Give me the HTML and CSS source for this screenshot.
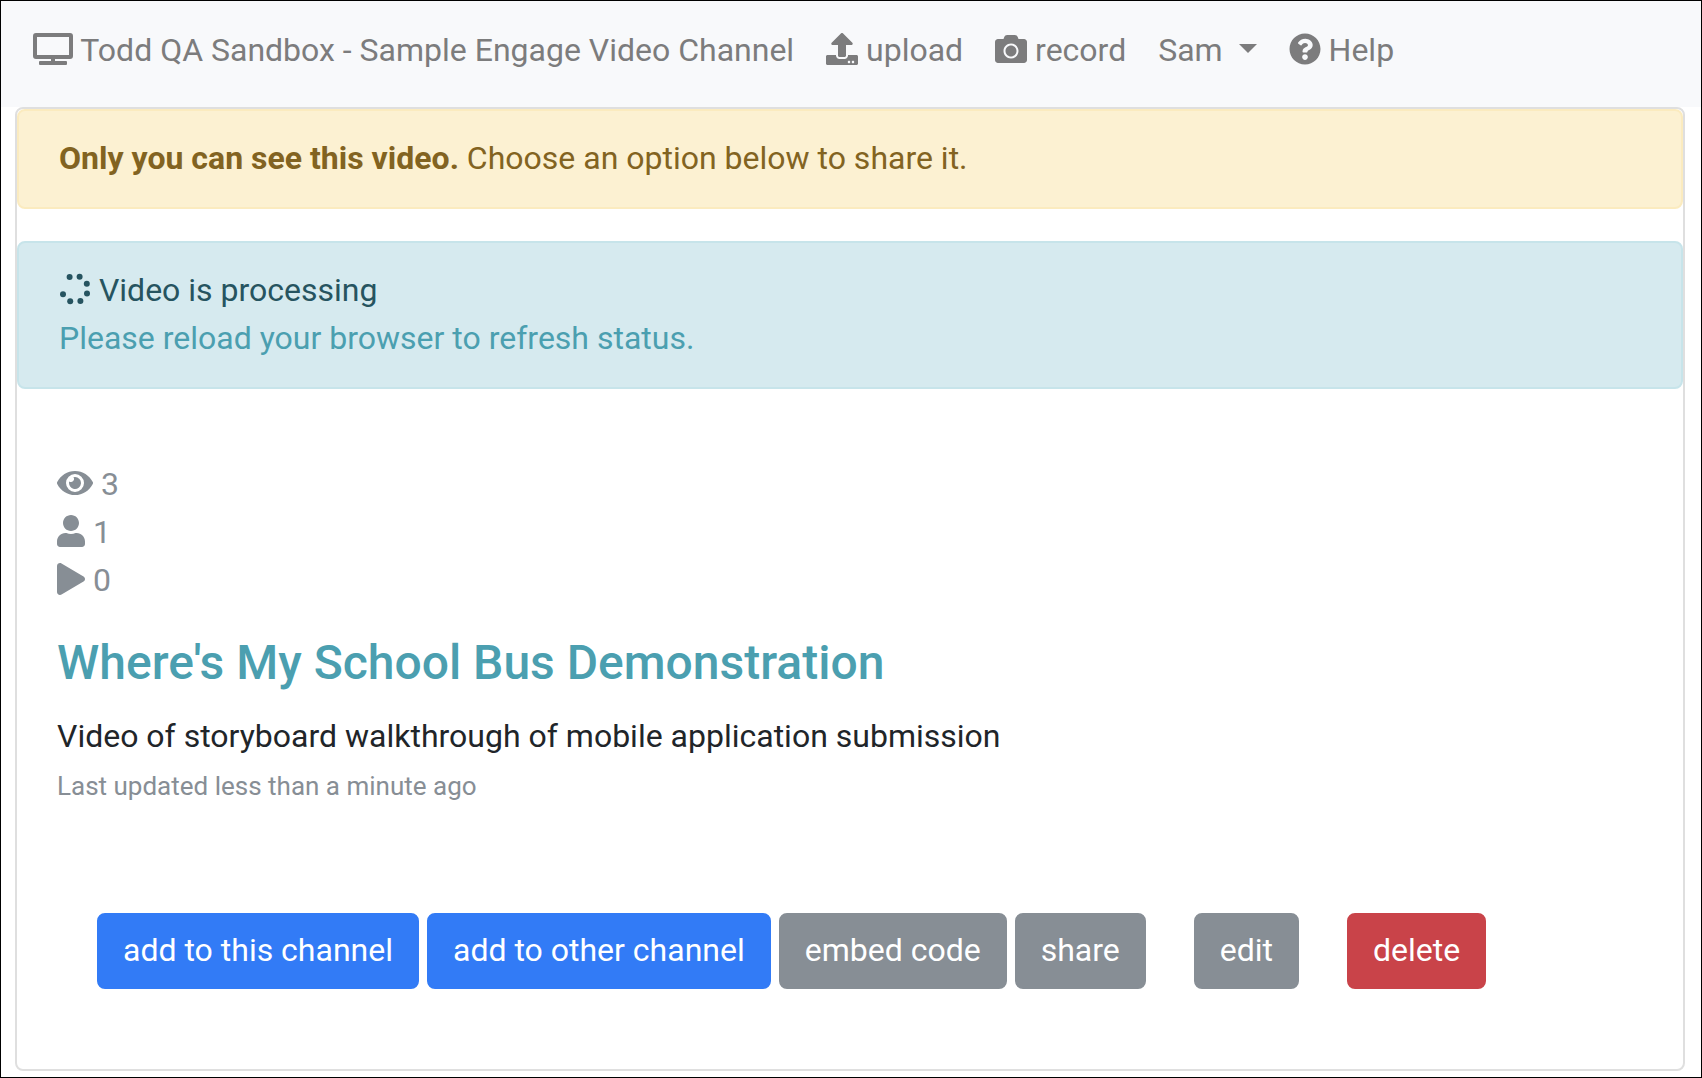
FILE: index.html
```html
<!DOCTYPE html>
<html lang="en">
<head>
  <meta charset="UTF-8">
  <meta name="viewport" content="width=device-width, initial-scale=1.0">
  <title>Where's My School Bus Demonstration</title>
  <link rel="stylesheet" href="styles.css">
</head>
<body>
  <nav class="navbar">
    <a class="nav-link" href="#">
      <svg class="icon icon-tv" viewBox="0 0 640 512"><path d="M592 0H48A48 48 0 0 0 0 48v320a48 48 0 0 0 48 48h240v32H112a16 16 0 0 0-16 16v32a16 16 0 0 0 16 16h416a16 16 0 0 0 16-16v-32a16 16 0 0 0-16-16H352v-32h240a48 48 0 0 0 48-48V48a48 48 0 0 0-48-48zm-16 352H64V64h512z"/></svg>
      Todd QA Sandbox - Sample Engage Video Channel
    </a>
    <a class="nav-link" href="#">
      <svg class="icon" viewBox="0 0 512 512"><path d="M296 384h-80c-13.300 0-24-10.700-24-24V192h-87.700c-17.800 0-26.700-21.500-14.100-34.100L242.300 5.700c7.500-7.500 19.800-7.500 27.300 0l152.200 152.200c12.600 12.600 3.700 34.100-14.100 34.100H320v168c0 13.300-10.700 24-24 24zm216-8v112c0 13.300-10.700 24-24 24H24c-13.300 0-24-10.700-24-24V376c0-13.300 10.700-24 24-24h136v8c0 30.900 25.100 56 56 56h80c30.900 0 56-25.100 56-56v-8h136c13.300 0 24 10.700 24 24zm-124 88c0-11-9-20-20-20s-20 9-20 20 9 20 20 20 20-9 20-20zm64 0c0-11-9-20-20-20s-20 9-20 20 9 20 20 20 20-9 20-20z"/></svg>
      upload
    </a>
    <a class="nav-link" href="#">
      <svg class="icon" viewBox="0 0 512 512"><path d="M512 144v288c0 26.500-21.500 48-48 48H48c-26.500 0-48-21.500-48-48V144c0-26.500 21.500-48 48-48h88l12.300-32.900c7-18.700 24.900-31.100 44.900-31.100h125.500c20 0 37.900 12.400 44.900 31.100L376 96h88c26.500 0 48 21.500 48 48zM376 288c0-66.200-53.800-120-120-120s-120 53.800-120 120 53.800 120 120 120 120-53.800 120-120zm-32 0c0 48.500-39.500 88-88 88s-88-39.500-88-88 39.500-88 88-88 88 39.500 88 88z"/></svg>
      record
    </a>
    <button class="nav-link dropdown-toggle" type="button">Sam </button>
    <a class="nav-link" href="#">
      <svg class="icon" viewBox="0 0 512 512"><path d="M504 256c0 136.997-111.043 248-248 248S8 392.997 8 256C8 119.083 119.043 8 256 8s248 111.083 248 248zM262.655 90c-54.497 0-89.255 22.957-116.549 63.758-3.536 5.286-2.353 12.415 2.715 16.258l34.699 26.310c5.205 3.947 12.621 3.008 16.665-2.122 17.864-22.658 30.113-35.797 57.303-35.797 20.429 0 45.698 13.148 45.698 32.958 0 14.976-12.363 22.667-32.534 33.976C247.128 238.528 216 254.941 216 296v4c0 6.627 5.373 12 12 12h56c6.627 0 12-5.373 12-12v-1.333c0-28.462 83.186-29.647 83.186-106.667 0-58.002-60.165-102-116.531-102zM256 338c-25.365 0-46 20.635-46 46 0 25.364 20.635 46 46 46s46-20.636 46-46c0-25.365-20.635-46-46-46z"/></svg>
      Help
    </a>
  </nav>

  <main class="card">
    <div class="alert alert-warning">
      <strong>Only you can see this video.</strong> Choose an option below to share it.
    </div>
    <div class="alert alert-info">
      <svg class="icon" viewBox="0 0 32 32"><circle cx="10.600" cy="4" r="3"/><circle cx="20.600" cy="3.700" r="3"/><circle cx="27.800" cy="10.700" r="3"/><circle cx="28" cy="20.500" r="3"/><circle cx="21.400" cy="28" r="3"/><circle cx="11.200" cy="28.300" r="3"/><circle cx="4" cy="21.200" r="3"/></svg>
      Video is processing
      <div class="text-info">Please reload your browser to refresh status.</div>
    </div>

    <div class="card-body">
      <div class="stats">
        <div>
          <svg class="icon icon-eye" viewBox="0 0 576 512"><path d="M572.520 241.400C518.290 135.590 410.930 64 288 64S57.680 135.640 3.480 241.410a32.350 32.350 0 0 0 0 29.190C57.710 376.410 165.070 448 288 448s230.320-71.640 284.520-177.410a32.350 32.350 0 0 0 0-29.190zM288 400a144 144 0 1 1 144-144 143.930 143.930 0 0 1-144 144zm0-240a95.310 95.310 0 0 0-25.310 3.790 47.850 47.850 0 0 1-66.900 66.900A95.780 95.780 0 1 0 288 160z"/></svg>
          3
        </div>
        <div>
          <svg class="icon icon-narrow" viewBox="0 0 448 512"><path d="M224 256c70.700 0 128-57.300 128-128S294.700 0 224 0 96 57.300 96 128s57.300 128 128 128zm89.600 32h-16.700c-22.200 10.200-46.900 16-72.900 16s-50.600-5.800-72.900-16h-16.700C60.200 288 0 348.200 0 422.400V464c0 26.500 21.500 48 48 48h352c26.500 0 48-21.500 48-48v-41.600c0-74.200-60.200-134.400-134.400-134.400z"/></svg>
          1
        </div>
        <div>
          <svg class="icon icon-narrow" viewBox="0 0 448 512"><path d="M424.400 214.700L72.400 6.600C43.800-10.300 0 6.100 0 47.900V464c0 37.500 40.700 60.100 72.400 41.300l352-208c31.400-18.500 31.500-64.100 0-82.600z"/></svg>
          0
        </div>
      </div>
      <h1 class="card-title">Where's My School Bus Demonstration</h1>
      <p class="card-text">Video of storyboard walkthrough of mobile application submission</p>
      <p class="updated"><small>Last updated less than a minute ago</small></p>

      <div class="actions">
        <button class="btn btn-primary" type="button">add to this channel</button>
        <button class="btn btn-primary" type="button">add to other channel</button>
        <button class="btn btn-secondary" type="button">embed code</button>
        <button class="btn btn-secondary" type="button">share</button>
        <button class="btn btn-secondary btn-apart" type="button">edit</button>
        <button class="btn btn-danger btn-apart" type="button">delete</button>
      </div>
    </div>
  </main>
</body>
</html>
```

FILE: styles.css
```css
* {
  box-sizing: border-box;
}
body {
  margin: 0;
  min-height: 100vh;
  border: 1px solid #000;
  background-color: #fff;
  color: #212529;
  font-family: Roboto, "Liberation Sans", sans-serif;
  font-size: 32px;
  line-height: 48px;
}
.navbar {
  display: flex;
  flex-wrap: wrap;
  gap: 0 32px;
  padding: 25px 32px 33px;
  background-color: #f8f9fb;
}
.nav-link {
  padding: 0;
  border: none;
  background: none;
  color: #7c7c7d;
  font: inherit;
  text-decoration: none;
  cursor: pointer;
}
.dropdown-toggle::after {
  content: "";
  display: inline-block;
  margin-left: 8px;
  vertical-align: 8px;
  border-top: 9px solid;
  border-left: 9px solid transparent;
  border-right: 9px solid transparent;
}
.icon {
  display: inline-block;
  width: 32px;
  height: 32px;
  vertical-align: -4px;
  fill: currentColor;
}
.icon-tv { width: 40px; }
.icon-eye { width: 36px; }
.icon-narrow { width: 28px; }
.card {
  margin: 0 16px 6px 14px;
  border: 2px solid #dfdfdf;
  border-radius: 8px;
}
.alert {
  margin-bottom: 32px;
  padding: 23px 40px 25px;
  border: 2px solid;
  border-radius: 8px;
}
.alert-warning {
  color: #826321;
  background-color: #fcf1d2;
  border-color: #fbebbf;
}
.alert-info {
  color: #265460;
  background-color: #d6eaef;
  border-color: #c7e4ea;
}
.text-info {
  color: #4b9fb0;
}
.card-body {
  padding: 39px 40px 80px;
}
.stats {
  color: #878e95;
}
.card-title {
  margin: 30px 0 20px;
  color: #4b9fb0;
  font-size: 48px;
  font-weight: 500;
  line-height: 58px;
}
.card-text {
  margin: 0;
}
.updated {
  margin: 0 0 103px;
  color: #878e95;
}
.updated small {
  font-size: 26px;
}
.actions {
  display: flex;
  flex-wrap: wrap;
  gap: 8px;
  padding: 0 40px;
}
.btn {
  padding: 11px 24px 13px;
  border: 2px solid transparent;
  border-radius: 8px;
  color: #fff;
  font: inherit;
  cursor: pointer;
}
.btn-primary {
  background-color: #327bf6;
  border-color: #327bf6;
}
.btn-secondary {
  background-color: #878e95;
  border-color: #878e95;
}
.btn-danger {
  background-color: #c94349;
  border-color: #c94349;
}
.btn-apart {
  margin-left: 40px;
}
```
